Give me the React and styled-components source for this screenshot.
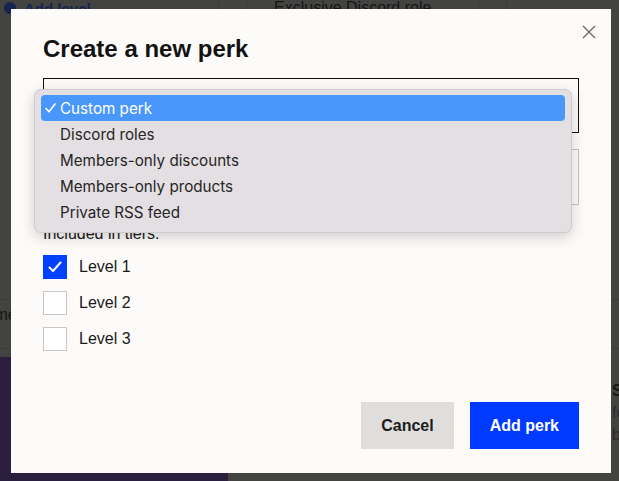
import React, { useState } from "react";
import styled, { createGlobalStyle } from "styled-components";

const GlobalStyle = createGlobalStyle`
  html, body {
    margin: 0;
    padding: 0;
    height: 100%;
    overflow: hidden;
  }
  body {
    background: #434341;
    font-family: "Liberation Sans", Arial, sans-serif;
  }
`;

const perkTypes = [
  "Custom perk",
  "Discord roles",
  "Members-only discounts",
  "Members-only products",
  "Private RSS feed",
];

const tiers = ["Level 1", "Level 2", "Level 3"];

const App = () => {
  const [selected, setSelected] = useState(0);
  const [checked, setChecked] = useState([true, false, false]);

  const toggle = (index) => {
    const next = [...checked];
    next[index] = !next[index];
    setChecked(next);
  };

  return (
    <>
      <GlobalStyle />
      <Page>
        <TopBar>
          <AddLink>
            <AddDot />
            Add level
          </AddLink>
          <ColDivider />
          <ColDivider />
          <HeaderTitle>Exclusive Discord role</HeaderTitle>
          <ColDivider />
          <ColDivider />
        </TopBar>
        <PageBody>
          <SideText>Name</SideText>
          <PurpleBlock />
        </PageBody>
        <RightNote>
          <strong>Start</strong>
          <span>fo</span>
          <span>b</span>
        </RightNote>
      </Page>

      <Modal>
        <CloseButton aria-label="Close">
          <svg width="14" height="14" viewBox="0 0 14 14">
            <path
              d="M1 1 L13 13 M13 1 L1 13"
              stroke="#666"
              strokeWidth="1.3"
              fill="none"
            />
          </svg>
        </CloseButton>
        <Title>Create a new perk</Title>

        <FieldWrap>
          <SelectBox />
          <Menu>
            {perkTypes.map((type, index) => (
              <MenuItem
                key={type}
                $active={index === selected}
                onClick={() => setSelected(index)}
              >
                <Check>
                  {index === selected && (
                    <svg width="11" height="10" viewBox="0 0 11 10">
                      <path
                        d="M1 5.5 L4 8.8 L10 1"
                        stroke="#fff"
                        strokeWidth="1.6"
                        fill="none"
                        strokeLinecap="round"
                        strokeLinejoin="round"
                      />
                    </svg>
                  )}
                </Check>
                {type}
              </MenuItem>
            ))}
          </Menu>
        </FieldWrap>

        <TextBox />

        <TierLabel>Included in tiers:</TierLabel>
        <TierList>
          {tiers.map((tier, index) => (
            <TierRow key={tier} onClick={() => toggle(index)}>
              <Box $checked={checked[index]}>
                {checked[index] && (
                  <svg width="14" height="12" viewBox="0 0 14 12">
                    <path
                      d="M1.5 6.5 L5 10 L12.5 1.5"
                      stroke="#fff"
                      strokeWidth="2"
                      fill="none"
                      strokeLinecap="round"
                      strokeLinejoin="round"
                    />
                  </svg>
                )}
              </Box>
              {tier}
            </TierRow>
          ))}
        </TierList>

        <Footer>
          <Button>Cancel</Button>
          <Button $primary>Add perk</Button>
        </Footer>
      </Modal>
    </>
  );
};

export default App;

// Styles //
const Page = styled.div`
  position: relative;
  width: 619px;
  height: 481px;
  background: #434341;
  color: #1c1c1c;
`;
const TopBar = styled.div`
  display: flex;
  align-items: center;
  height: 22px;
  margin-top: -3px;
`;
const AddLink = styled.div`
  display: flex;
  align-items: center;
  gap: 8px;
  width: 214px;
  padding-left: 4px;
  color: #16244f;
  font-size: 15px;
  font-weight: bold;
`;
const AddDot = styled.span`
  width: 12px;
  height: 12px;
  border-radius: 50%;
  background: #16244f;
`;
const ColDivider = styled.div`
  width: 27px;
  align-self: stretch;
  border-left: 1px solid #3a3a38;
`;
const HeaderTitle = styled.div`
  width: 204px;
  font-size: 16px;
  color: #151515;
`;
const PageBody = styled.div`
  display: flex;
  flex-direction: column;
  padding-top: 280px;
`;
const SideText = styled.div`
  height: 48px;
  font-size: 16px;
  text-indent: -26px;
  line-height: 30px;
  color: #161616;
  border-top: 1px solid #3b3b39;
  border-bottom: 1px solid #3b3b39;
`;
const PurpleBlock = styled.div`
  width: 228px;
  height: 140px;
  margin-top: 8px;
  background: #2c1e3f;
`;
const RightNote = styled.div`
  position: absolute;
  left: 612px;
  top: 383px;
  display: flex;
  flex-direction: column;
  font-size: 16px;
  line-height: 22px;
  color: #151515;
  span {
    color: #2c2c2b;
  }
`;
const Modal = styled.div`
  position: fixed;
  left: 11px;
  top: 9px;
  width: 600px;
  height: 464px;
  box-sizing: border-box;
  padding: 26px 32px 24px;
  background: #fcfbf9;
  display: flex;
  flex-direction: column;
`;
const CloseButton = styled.button`
  position: absolute;
  right: 11px;
  top: 12px;
  width: 22px;
  height: 22px;
  padding: 0;
  border: none;
  background: none;
  display: flex;
  align-items: center;
  justify-content: center;
  cursor: pointer;
`;
const Title = styled.h2`
  margin: 0 0 15px;
  font-size: 24px;
  line-height: 28px;
  font-weight: bold;
  color: #121212;
`;
const FieldWrap = styled.div`
  position: relative;
`;
const SelectBox = styled.div`
  height: 55px;
  box-sizing: border-box;
  border: 1px solid #111;
  background: #fcfbf9;
`;
const Menu = styled.ul`
  position: absolute;
  left: -9px;
  top: 11px;
  width: 538px;
  box-sizing: border-box;
  margin: 0;
  padding: 5px 6px 7px;
  list-style: none;
  background: #e3dfe3;
  border: 1px solid #cfcbcf;
  border-radius: 7px;
  box-shadow: 0 4px 14px rgba(0, 0, 0, 0.18);
  font-family: Inter, "Liberation Sans", sans-serif;
  z-index: 2;
`;
const MenuItem = styled.li`
  display: flex;
  align-items: center;
  height: 26px;
  padding-left: 4px;
  border-radius: 4px;
  font-size: 15.2px;
  color: ${(p) => (p.$active ? "#fff" : "#262626")};
  background: ${(p) => (p.$active ? "#4a97fc" : "transparent")};
  cursor: default;
`;
const Check = styled.span`
  width: 15px;
  display: flex;
  align-items: center;
`;
const TextBox = styled.div`
  height: 56px;
  margin-top: 16px;
  box-sizing: border-box;
  border: 1px solid #c4c3c1;
`;
const TierLabel = styled.div`
  margin-top: 19px;
  font-size: 16px;
  line-height: 20px;
  color: #1a1a1a;
`;
const TierList = styled.div`
  display: flex;
  flex-direction: column;
  gap: 12px;
  margin-top: 11px;
`;
const TierRow = styled.label`
  display: flex;
  align-items: center;
  gap: 12px;
  font-size: 16px;
  color: #1a1a1a;
  cursor: pointer;
`;
const Box = styled.span`
  width: 24px;
  height: 24px;
  box-sizing: border-box;
  display: flex;
  align-items: center;
  justify-content: center;
  border: 1px solid ${(p) => (p.$checked ? "#0040ff" : "#c7c6c4")};
  background: ${(p) => (p.$checked ? "#0040ff" : "#fff")};
`;
const Footer = styled.div`
  margin-top: auto;
  display: flex;
  justify-content: flex-end;
  gap: 16px;
`;
const Button = styled.button`
  height: 47px;
  padding: 0 20px;
  border: none;
  font-family: "Liberation Sans", Arial, sans-serif;
  font-size: 16px;
  font-weight: bold;
  color: ${(p) => (p.$primary ? "#fff" : "#1c1c1c")};
  background: ${(p) => (p.$primary ? "#0039ff" : "#dfdedd")};
  cursor: pointer;
`;
